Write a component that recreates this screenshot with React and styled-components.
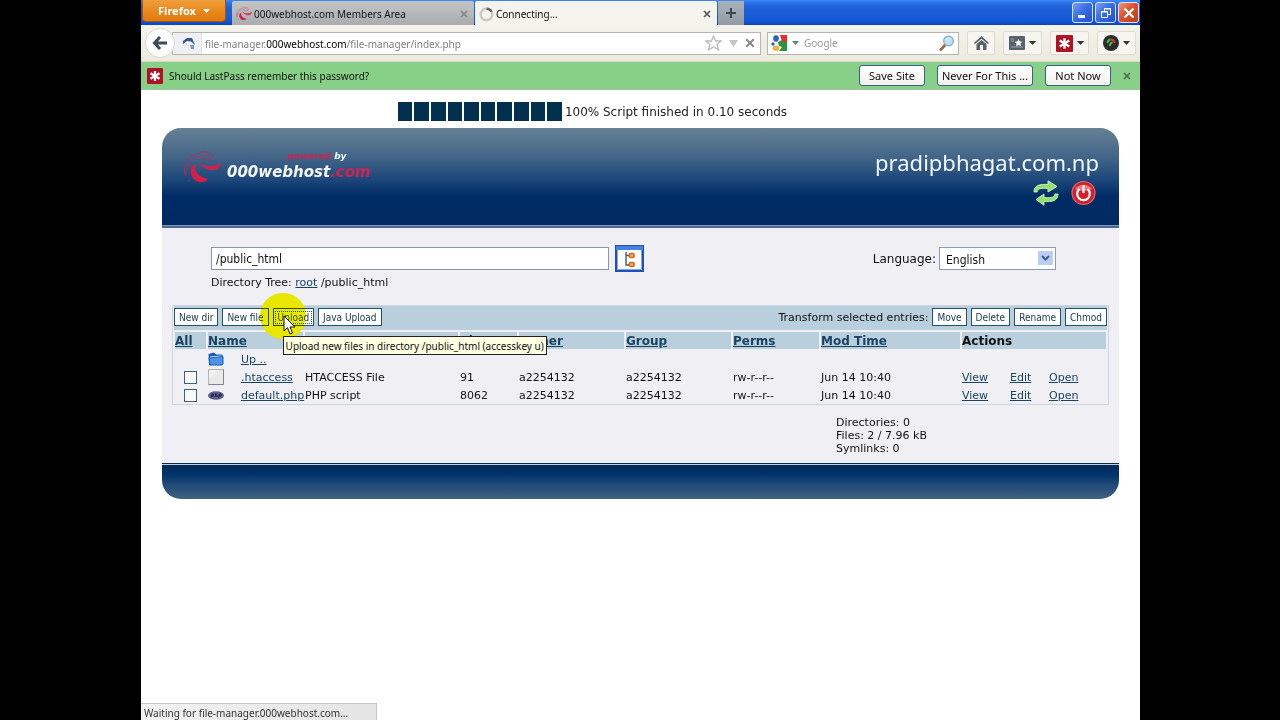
import React, { useState } from 'react';
import styled, { createGlobalStyle } from 'styled-components';

const uiFont = `'Noto Sans', 'Open Sans', sans-serif`;
const controlFont = `'DejaVu Sans Condensed', 'DejaVu Sans', sans-serif`;
const siteFont = `'DejaVu Sans', sans-serif`;

const GlobalStyle = createGlobalStyle`
    * {
        box-sizing: border-box;
    }
    body {
        margin: 0;
        background: #000;
        font-family: ${siteFont};
        color: #111;
    }
    button, input, select {
        font-family: inherit;
        color: inherit;
        margin: 0;
    }
    svg {
        display: block;
        flex: none;
    }
`;

const Screen = styled.div`
    padding: 0 140px 0 141px;
`;

const Window = styled.div`
    display: flex;
    flex-direction: column;
    min-height: 100vh;
    background: #fff;
    overflow: hidden;
`;

/* browser chrome */

const TitleBar = styled.header`
    display: flex;
    height: 25px;
    padding-left: 1px;
    font-family: ${uiFont};
    background: linear-gradient(#3d8df5 0, #2a6fe6 3px, #1f5fd6 8px, #1458d8 20px, #0a45c0 25px);
`;

const FirefoxButton = styled.button`
    width: 84px;
    height: 22px;
    margin-right: 6px;
    padding: 0;
    border: 1px solid #a8560c;
    border-top: 0;
    border-radius: 0 0 4px 4px;
    background: linear-gradient(#f0a040, #ea8a1c 50%, #de7a10);
    color: #fff;
    font-size: 11px;
    font-weight: bold;
    display: flex;
    align-items: center;
    justify-content: center;
    gap: 7px;
`;

const Tab = styled.div`
    display: flex;
    align-items: center;
    gap: 2px;
    width: 242px;
    height: 24px;
    margin: 1px 1px 0 0;
    padding: 2px 6px 0 4px;
    border-radius: 2px 2px 0 0;
    background: ${props => props.$active ? '#f4f3ec' : 'linear-gradient(#c3c4c4, #a9adb0)'};
    font-size: 10px;

    span {
        flex: 1;
        white-space: nowrap;
    }
`;

const PlainButton = styled.button`
    display: flex;
    align-items: center;
    justify-content: center;
    padding: 0;
    border: 0;
    background: none;
`;

const NewTab = styled(PlainButton)`
    width: 26px;
    height: 24px;
    margin-top: 1px;
    background: linear-gradient(#a9b1b9, #939ca6);
`;

const WindowButtons = styled.div`
    display: flex;
    gap: 2px;
    margin: 2px 1px 0 auto;
`;

const WindowButton = styled(PlainButton)`
    width: 21px;
    height: 21px;
    border: 1px solid #d6e2fa;
    border-radius: 3px;
    background: ${props => props.$close
        ? 'linear-gradient(135deg, #f09878, #e0502c 45%, #c03c18)'
        : 'linear-gradient(135deg, #7ba2f2, #3a6ee4 45%, #1f50cc)'};
`;

const NavBar = styled.nav`
    display: flex;
    align-items: center;
    height: 37px;
    padding: 0 4px;
    background: linear-gradient(#f4f3ec, #ece9dc);
    border-bottom: 1px solid #d8d8c4;
    font-family: ${uiFont};
    font-size: 10px;
`;

const BackButton = styled(PlainButton)`
    width: 30px;
    height: 30px;
    border: 1px solid #dcdad0;
    border-radius: 50%;
    background: #fdfdfb;
    position: relative;
    z-index: 1;
`;

const Field = styled.div`
    display: flex;
    align-items: center;
    height: 23px;
    border: 1px solid #b6b6b0;
    background: #fff;

    input {
        flex: 1;
        min-width: 0;
        padding: 0;
        border: 0;
        outline: 0;
        background: none;
        font-size: 10px;
    }
    input::placeholder {
        color: #999;
        opacity: 1;
    }
`;

const AddressBar = styled(Field)`
    flex: 1;
    margin: 0 6px 0 -3px;
    padding-right: 5px;
    gap: 7px;
`;

const SiteIdentity = styled.span`
    display: flex;
    align-items: center;
    justify-content: center;
    width: 29px;
    height: 21px;
    padding-left: 4px;
    background: #eef0f6;
    border-right: 1px solid #dfe3ee;
`;

const Url = styled.div`
    flex: 1;
    margin-left: -4px;
    padding-top: 1px;
    color: #808080;
    white-space: nowrap;

    b {
        font-weight: normal;
        color: #000;
    }
`;

const SearchBar = styled(Field)`
    width: 192px;
    padding: 0 3px;
    gap: 5px;
`;

const ToolButton = styled(PlainButton)`
    width: ${props => props.$narrow ? '28px' : '39px'};
    height: 24px;
    margin-left: 8px;
    gap: 4px;
    border: 1px solid #dedbd0;
    border-radius: 2px;
    background: #f6f5ef;
`;

const Notice = styled.div`
    display: flex;
    align-items: center;
    height: 28px;
    padding: 0 9px 0 6px;
    background: #88cf87;
    border-bottom: 1px solid #a4bfa2;
    font-family: ${uiFont};
    font-size: 10px;

    p {
        flex: 1;
        margin: 0 0 0 6px;
    }
`;

const NoticeButton = styled.button`
    width: ${props => props.$wide ? '96px' : '66px'};
    height: 21px;
    margin-right: 12px;
    padding: 0;
    border: 1px solid #36618c;
    border-radius: 3px;
    background: linear-gradient(#fff, #f2f1ea);
    font-size: 11px;
    white-space: nowrap;
`;

const StatusBar = styled.footer`
    align-self: flex-start;
    width: 236px;
    height: 17px;
    margin-top: auto;
    padding-left: 3px;
    border: 1px solid #c6c6c6;
    border-width: 1px 1px 0 0;
    background: linear-gradient(90deg, #f2f2f2, #e4e4e4);
    font-family: ${uiFont};
    font-size: 10px;
    line-height: 18px;
    color: #333;
`;

/* file manager page */

const Page = styled.main`
    padding: 12px 21px;
`;

const Progress = styled.div`
    display: flex;
    align-items: center;
    justify-content: center;
    gap: 3px;
    height: 19px;
    margin-bottom: 7px;
    padding-right: 96px;
    font-size: 12px;
    color: #222;
`;

const Blocks = styled.div`
    display: grid;
    grid-template-columns: repeat(10, 1fr);
    gap: 2px;
    width: 164px;
    height: 19px;

    i {
        background: #04304f;
    }
`;

const Card = styled.section`
    overflow: hidden;
    border-radius: 19px;
    background: #f0f0f4;
`;

const CardHeader = styled.div`
    display: flex;
    justify-content: space-between;
    height: 100px;
    padding: 22px 20px 0 21px;
    background: linear-gradient(#668194 0, #416488 30px, #1d477a 52px, #002c66 68px, #002a60 97px, #8398b4 97px, #8398b4 98px, #4a6a92 98px);
`;

const Brand = styled.a`
    display: flex;
    align-items: flex-start;
    gap: 6px;
    height: 40px;
    color: #f4f8ff;
    font-weight: bold;
    font-style: italic;
    text-decoration: none;

    svg {
        margin-top: 1px;
    }
    em {
        color: #cc2450;
    }
`;

const BrandText = styled.span`
    display: flex;
    flex-direction: column;
    font-size: 15px;
    line-height: 18px;

    small {
        padding-left: 60px;
        font-size: 9px;
        line-height: 13px;
    }
`;

const Account = styled.div`
    text-align: right;
    color: #f0f8ff;

    h1 {
        margin: 0;
        font-family: 'Noto Sans', sans-serif;
        font-size: 22px;
        font-weight: normal;
        line-height: 24px;
    }
`;

const AccountButtons = styled.div`
    display: flex;
    justify-content: flex-end;
    gap: 12px;
    padding: 6px 3px 0 0;
`;

const CardBody = styled.div`
    padding: 17px 10px 8px;
`;

const PathRow = styled.form`
    display: flex;
    align-items: center;
    height: 27px;
    padding: 0 53px 0 39px;
    font-size: 12px;
`;

const PathInput = styled.input`
    flex: 0 1 398px;
    min-width: 0;
    height: 23px;
    margin-right: 6px;
    padding: 0 4px;
    border: 1px solid #8a97a4;
    background: #fff;
    font-family: ${controlFont};
    font-size: 12px;
`;

const LanguageLabel = styled.label`
    margin: 0 3px 0 auto;
`;

const SelectBox = styled.div`
    position: relative;

    select {
        width: 117px;
        height: 23px;
        padding: 2px 6px 0;
        appearance: none;
        border: 1px solid #8a9bb4;
        border-radius: 0;
        background: #fff;
        font-family: ${controlFont};
        font-size: 12px;
    }
    svg {
        position: absolute;
        top: 4px;
        right: 3px;
        pointer-events: none;
    }
`;

const Crumbs = styled.p`
    margin: 4px 0 15px 39px;
    font-size: 11px;
    line-height: 14px;
`;

const Link = styled.a`
    color: #174461;
    text-decoration: underline;
`;

const Listing = styled.div`
    border: 1px solid #cbd6e0;
`;

const ActionBar = styled.div`
    display: flex;
    align-items: center;
    gap: 4px;
    height: 24px;
    margin: 0 1px 2px;
    padding-bottom: 2px;
    background: #b9cfde;
    font-size: 11px;
`;

const TransformLabel = styled.span`
    margin-left: auto;
    white-space: nowrap;
`;

const ActionButton = styled.button`
    position: relative;
    z-index: 2;
    height: 18px;
    padding: 0 4px;
    border: 1px solid #24506c;
    background: #fff;
    color: #17374c;
    font-family: ${controlFont};
    font-size: 10px;
    white-space: nowrap;

    span {
        display: block;
        margin: 0 -3px;
        padding: 0 2px;
        border: 1px dotted ${props => props.$focused ? '#24506c' : 'transparent'};
    }
`;

const Pointed = styled.div`
    position: relative;
    height: 18px;
`;

const Halo = styled.i`
    position: absolute;
    z-index: ${props => props.$over ? 3 : 1};
    top: -15px;
    left: -13px;
    width: 46px;
    height: 46px;
    border-radius: 50%;
    background: #e9e600;
    mix-blend-mode: ${props => props.$over ? 'darken' : 'normal'};
    pointer-events: none;
`;

const Pointer = styled.svg`
    position: absolute;
    z-index: 5;
    top: 7px;
    left: 10px;
    pointer-events: none;
`;

const Tooltip = styled.div`
    position: absolute;
    z-index: 4;
    top: 28px;
    left: 10px;
    height: 19px;
    padding: 0 2px;
    border: 1px solid #222;
    background: #ffffe1;
    font-family: ${uiFont};
    font-size: 10px;
    line-height: 18px;
    white-space: nowrap;
`;

const FileTable = styled.table`
    width: 100%;
    table-layout: fixed;
    border-collapse: separate;
    border-spacing: 2px 0;
    font-size: 11px;

    th {
        height: 17px;
        padding: 1px 0 0;
        background: #b9cfde;
        font-size: 12px;
        line-height: 16px;
        text-align: left;
    }
    td {
        height: 18px;
        padding: 1px 0 0;
        line-height: 17px;
        white-space: nowrap;
    }
    tbody tr:first-child td {
        padding-top: 2px;
    }
`;

const Tick = styled.input`
    display: block;
    appearance: none;
    width: 13px;
    height: 13px;
    margin: 0 0 0 9px;
    border: 1px solid #3f6276;
    background: #f8f8f6;
`;

const NameCell = styled.div`
    display: grid;
    grid-template-columns: 33px 1fr;
    align-items: center;

    svg {
        margin-bottom: 1px;
    }
`;

const Actions = styled.div`
    display: grid;
    grid-template-columns: 48px 39px 1fr;
`;

const Totals = styled.p`
    margin: 11px 0 0 664px;
    font-size: 11px;
    line-height: 13px;
`;

const CardFooter = styled.div`
    height: 36px;
    border-top: 1px solid #0d2c48;
    background: linear-gradient(#c0d0dc 0, #c0d0dc 1px, #002a58 1px, #00336b 10px, #1d4877 20px, #42627f 35px);
`;

/* icons */

const DragonMark = ({ size = 38 }) => (
    <svg width={size} height={size * 34 / 38} viewBox="0 0 38 34" fill="none" stroke="#cc2450">
        <path d="M2 23C-1 12 8 2 21 1C28 1 32 5 29 8C26 11 20 8 17 5" strokeWidth="0.9" opacity="0.8" />
        <path d="M8 9C12 5 17 6 20 7M21 3C25 4 27 5 28 7" strokeWidth="0.8" opacity="0.8" />
        <path d="M16 12C22 17 33 17 37 12C37 20 26 22 16 12Z" fill="#d81e48" />
        <path d="M13 13C10 21 16 26 25 28C20 34 10 31 8 23C7 18 9 14 13 13Z" fill="#d81e48" stroke="none" />
        <path d="M3 25C2 18 4 14 8 12M5 29L7 31" strokeWidth="1" opacity="0.8" />
    </svg>
);

const CrossIcon = ({ color = '#777', size = 8 }) => (
    <svg width={size} height={size} viewBox="0 0 8 8" stroke={color} strokeWidth="1.6">
        <path d="M1 1L7 7M7 1L1 7" />
    </svg>
);

const Caret = ({ color = '#333' }) => (
    <svg width="7" height="4" viewBox="0 0 7 4"><path d="M0 0H7L3.5 4Z" fill={color} /></svg>
);

const Spinner = () => (
    <svg width="15" height="15" viewBox="0 0 15 15" fill="none" strokeWidth="2.4">
        <circle cx="7.5" cy="7.5" r="5.8" stroke="#c9c9c5" />
        <path d="M7.5 1.7A5.8 5.8 0 0 1 12.6 4.8" stroke="#666" />
    </svg>
);

const LastPassIcon = ({ size = 16 }) => (
    <svg width={size} height={size} viewBox="0 0 16 16">
        <rect width="16" height="16" rx="1" fill="#b01228" />
        <path d="M8 3V13M3.5 5.2L12.5 10.8M12.5 5.2L3.5 10.8" stroke="#fff" strokeWidth="2.2" />
    </svg>
);

const SiteIcon = () => (
    <svg width="14" height="13" viewBox="0 0 14 13">
        <path d="M1 4L5 1H10L13 8L9 4.500L5 4L1 7Z" fill="#345a92" />
        <path d="M8 8H12V12H9Z" fill="#8298bc" />
        <path d="M2 11L5 7" stroke="#d4dbe8" />
    </svg>
);

const GoogleIcon = () => (
    <svg width="16" height="16" viewBox="0 0 16 16">
        <path d="M9 0H16V7H11Z" fill="#e0342a" />
        <path d="M10 7H16V16H8L11 12Z" fill="#2a9540" />
        <path d="M7 7L11 5V12L8 11Z" fill="#2a9540" />
        <ellipse cx="5" cy="3.5" rx="2.8" ry="3.3" fill="#2b5fc4" />
        <circle cx="2" cy="9" r="1.7" fill="#2b5fc4" />
        <ellipse cx="5" cy="13.2" rx="3.4" ry="2.6" fill="#eeb040" />
    </svg>
);

const SearchIcon = () => (
    <svg width="17" height="17" viewBox="0 0 17 17">
        <path d="M2 15.5L8 9" stroke="#a3633c" strokeWidth="2.6" />
        <circle cx="10.5" cy="6" r="4.8" fill="#bfe2f6" stroke="#8ab0cc" strokeWidth="1.4" />
        <path d="M8 5C8.5 3.5 10 3 11.5 3.2" stroke="#fff" fill="none" />
    </svg>
);

const FolderIcon = () => (
    <svg width="16" height="14" viewBox="0 0 16 14">
        <path d="M0.500 2L6 0.5L8 2.5L14.500 2.500V12L1 13Z" fill="#1b5cb8" />
        <path d="M2 4.500L13.500 3.500V6H2Z" fill="#e6f1fc" />
        <path d="M1 6L15 4.500V12L14 13H2Z" fill="#4a94ea" stroke="#1c59ae" />
    </svg>
);

const BlankFileIcon = () => (
    <svg width="16" height="16" viewBox="0 0 16 16">
        <rect x="0.5" y="0.5" width="15" height="15" fill="#e9e9e9" stroke="#b4b4b4" />
        <path d="M15.5 0.5V15.5H0.5" stroke="#858585" fill="none" />
        <path d="M1 1H10L1 10Z" fill="#f2f2f2" />
    </svg>
);

const PhpIcon = () => (
    <svg width="16" height="9" viewBox="0 0 16 9">
        <ellipse cx="8" cy="4.5" rx="8" ry="4.3" fill="#5d5f92" />
        <path d="M3 7L4 3H5.5V5H4M7 6L8 2M7.6 4H9V6M10.5 7L11.5 3H13V5H11" stroke="#1e1e3c" fill="none" />
    </svg>
);

const TreeIcon = () => (
    <svg width="29" height="27" viewBox="0 0 29 27">
        <rect x="1" y="1" width="27" height="25" fill="#fff" stroke="#2350b4" strokeWidth="2" />
        <rect x="1" y="1" width="27" height="4" fill="#4680e0" />
        <path d="M2.5 5V24.5H26.5V5" stroke="#7ea6ee" fill="none" />
        <path d="M11 7V20H15M11 10.500H15" stroke="#445a78" strokeWidth="1.4" fill="none" />
        <rect x="14.500" y="8.500" width="4.500" height="4" rx="1" fill="#f8b060" stroke="#d8681c" strokeWidth="1.6" />
        <rect x="14.500" y="17.500" width="4.500" height="4" rx="1" fill="#f8b060" stroke="#d8681c" strokeWidth="1.6" />
    </svg>
);

const RefreshIcon = () => (
    <svg width="26" height="26" viewBox="0 0 26 26" fill="#8fe070" stroke="#d4f8c0" strokeWidth="0.9">
        <path d="M1 12C1 5 7 4 15 4.500V0.800L24 6.500L15 12V8.500C9 8 5 8 4 12Z" />
        <path d="M25 14C25 21 19 22 11 21.500V25.200L3 19.500L11 14V17.500C17 18 21 18 22 14Z" />
    </svg>
);

const PowerIcon = () => (
    <svg width="25" height="26" viewBox="0 0 25 26" fill="none">
        <circle cx="12.500" cy="13" r="11.500" fill="#d3202c" stroke="#e0686c" strokeWidth="1.2" />
        <path d="M4 9A10 9 0 0 1 21 9Q12 13 4 9Z" fill="#ee7a7c" />
        <path d="M8.500 9A6.300 6.300 0 1 0 16.500 9M12.500 5V13" stroke="#fff" strokeWidth="2.2" />
    </svg>
);

const columns = [
    ['All', 31], ['Name', 95], ['Type', 153], ['Size', 57], ['Owner', 105],
    ['Group', 105], ['Perms', 86], ['Mod Time', 139], ['Actions', 144],
];

const files = [
    { name: '.htaccess', icon: <BlankFileIcon />, type: 'HTACCESS File', size: '91' },
    { name: 'default.php', icon: <PhpIcon />, type: 'PHP script', size: '8062' },
];

function Chrome() {
    return (
        <>
            <TitleBar>
                <FirefoxButton>Firefox <Caret color="#fff" /></FirefoxButton>
                <Tab>
                    <DragonMark size={16} />
                    <span>000webhost.com Members Area</span>
                    <PlainButton aria-label="Close tab"><CrossIcon color="#858585" /></PlainButton>
                </Tab>
                <Tab $active>
                    <Spinner />
                    <span>Connecting...</span>
                    <PlainButton aria-label="Close tab"><CrossIcon color="#555" /></PlainButton>
                </Tab>
                <NewTab aria-label="New tab">
                    <svg width="10" height="10" viewBox="0 0 10 10" stroke="#3c4650" strokeWidth="2"><path d="M5 0V10M0 5H10" /></svg>
                </NewTab>
                <WindowButtons>
                    <WindowButton aria-label="Minimize">
                        <svg width="12" height="12"><rect x="1" y="8" width="7" height="3" fill="#fff" /></svg>
                    </WindowButton>
                    <WindowButton aria-label="Restore">
                        <svg width="12" height="12" fill="none" stroke="#fff"><path d="M4.500 4V1.500H10.500V7.500H8M4 2H11" /><path d="M1.500 4.500H7.500V10.500H1.500ZM1 5H8" /></svg>
                    </WindowButton>
                    <WindowButton $close aria-label="Close"><CrossIcon color="#fff" size={12} /></WindowButton>
                </WindowButtons>
            </TitleBar>
            <NavBar>
                <BackButton aria-label="Back">
                    <svg width="16" height="14" viewBox="0 0 16 14" fill="none" stroke="#414b55" strokeWidth="3"><path d="M8 1L2.500 7L8 13M3 7H15" /></svg>
                </BackButton>
                <AddressBar>
                    <SiteIdentity><SiteIcon /></SiteIdentity>
                    <Url>file-manager.<b>000webhost.com</b>/file-manager/index.php</Url>
                    <svg width="17" height="16" viewBox="0 0 17 16" fill="none" stroke="#bbb" strokeWidth="1.3"><path d="M8.500 1L10.600 6H16L12 9.400L13.500 15L8.500 11.800L3.500 15L5 9.400L1 6H6.400Z" /></svg>
                    <svg width="9" height="7"><path d="M0 0H9L4.500 7Z" fill="#c4c4c4" /></svg>
                    <PlainButton aria-label="Stop"><CrossIcon color="#888" size={10} /></PlainButton>
                </AddressBar>
                <SearchBar>
                    <GoogleIcon />
                    <Caret color="#5a8a7a" />
                    <input aria-label="Search" placeholder="Google" />
                    <SearchIcon />
                </SearchBar>
                <ToolButton $narrow aria-label="Home">
                    <svg width="15" height="14" viewBox="0 0 15 14" fill="#59626c"><path d="M7.500 0L15 7L14 8L7.500 2.800L1 8L0 7Z" /><path d="M2.500 8L7.500 4L12.500 8V14H9V9H6V14H2.500Z" /></svg>
                </ToolButton>
                <ToolButton aria-label="Bookmarks">
                    <svg width="16" height="14" viewBox="0 0 16 14"><rect width="16" height="14" rx="1" fill="#59626c" /><path d="M2 3H5M2 5H5M2 11H14" stroke="#9aa2aa" /><path d="M9.500 3L10.700 5.500L13.500 5.800L11.400 7.600L12 10.300L9.500 8.900L7 10.300L7.600 7.600L5.500 5.800L8.300 5.500Z" fill="#fff" /></svg>
                    <Caret />
                </ToolButton>
                <ToolButton aria-label="LastPass"><LastPassIcon size={17} /><Caret /></ToolButton>
                <ToolButton aria-label="Downloads">
                    <svg width="16" height="16" viewBox="0 0 16 16" fill="none" strokeWidth="2"><circle cx="8" cy="8" r="8" fill="#2a2d2c" /><path d="M4.500 8A4 4 0 0 1 7.500 4.500" stroke="#42b648" /><path d="M7.500 4.500A4 4 0 0 1 11.500 8" stroke="#d83a2c" /><path d="M7 11A3 3 0 0 1 9.500 7.500" stroke="#5ab848" /></svg>
                    <Caret />
                </ToolButton>
            </NavBar>
            <Notice>
                <LastPassIcon />
                <p>Should LastPass remember this password?</p>
                <NoticeButton>Save Site</NoticeButton>
                <NoticeButton $wide>Never For This ...</NoticeButton>
                <NoticeButton>Not Now</NoticeButton>
                <PlainButton aria-label="Dismiss"><CrossIcon color="#4a6a4a" /></PlainButton>
            </Notice>
        </>
    );
}

function UploadButton() {
    return (
        <Pointed>
            <Halo />
            <ActionButton $focused accessKey="u" aria-describedby="upload-tip"><span>Upload</span></ActionButton>
            <Halo $over />
            <Tooltip role="tooltip" id="upload-tip">Upload new files in directory /public_html (accesskey u)</Tooltip>
            <Pointer width="13" height="20" viewBox="0 0 13 20">
                <path d="M1 1V16L4.500 12.700L7 19L9.500 18L7 12H12Z" fill="#fff" stroke="#111" />
            </Pointer>
        </Pointed>
    );
}

function FileListing() {
    return (
        <Listing>
            <ActionBar>
                <ActionButton><span>New dir</span></ActionButton>
                <ActionButton><span>New file</span></ActionButton>
                <UploadButton />
                <ActionButton><span>Java Upload</span></ActionButton>
                <TransformLabel>Transform selected entries:</TransformLabel>
                <ActionButton><span>Move</span></ActionButton>
                <ActionButton><span>Delete</span></ActionButton>
                <ActionButton><span>Rename</span></ActionButton>
                <ActionButton><span>Chmod</span></ActionButton>
            </ActionBar>
            <FileTable>
                <colgroup>
                    {columns.map(([label, width]) => <col key={label} width={width} />)}
                </colgroup>
                <thead>
                    <tr>
                        {columns.map(([label]) => (
                            <th key={label}>{label === 'Actions' ? label : <Link href="#">{label}</Link>}</th>
                        ))}
                    </tr>
                </thead>
                <tbody>
                    <tr>
                        <td />
                        <td><NameCell><FolderIcon /><Link href="#">Up ..</Link></NameCell></td>
                        <td colSpan={7} />
                    </tr>
                    {files.map(file => (
                        <tr key={file.name}>
                            <td><Tick type="checkbox" aria-label={file.name} /></td>
                            <td><NameCell>{file.icon}<Link href="#">{file.name}</Link></NameCell></td>
                            <td>{file.type}</td>
                            <td>{file.size}</td>
                            <td>a2254132</td>
                            <td>a2254132</td>
                            <td>rw-r--r--</td>
                            <td>Jun 14 10:40</td>
                            <td>
                                <Actions>
                                    <span><Link href="#">View</Link></span>
                                    <span><Link href="#">Edit</Link></span>
                                    <span><Link href="#">Open</Link></span>
                                </Actions>
                            </td>
                        </tr>
                    ))}
                </tbody>
            </FileTable>
        </Listing>
    );
}

function App() {
    const [path, setPath] = useState('/public_html');

    return (
        <Screen>
            <GlobalStyle />
            <Window>
                <Chrome />
                <Page>
                    <Progress>
                        <Blocks>{Array.from({ length: 10 }, (_, i) => <i key={i} />)}</Blocks>
                        <span>100% Script finished in 0.10 seconds</span>
                    </Progress>
                    <Card>
                        <CardHeader>
                            <Brand href="#">
                                <DragonMark />
                                <BrandText>
                                    <small><em>powered</em> by</small>
                                    <span>000webhost<em>.com</em></span>
                                </BrandText>
                            </Brand>
                            <Account>
                                <h1>pradipbhagat.com.np</h1>
                                <AccountButtons>
                                    <PlainButton aria-label="Refresh"><RefreshIcon /></PlainButton>
                                    <PlainButton aria-label="Log out"><PowerIcon /></PlainButton>
                                </AccountButtons>
                            </Account>
                        </CardHeader>
                        <CardBody>
                            <PathRow>
                                <PathInput aria-label="Directory" value={path} onChange={e => setPath(e.target.value)} />
                                <PlainButton type="button" aria-label="Change directory"><TreeIcon /></PlainButton>
                                <LanguageLabel htmlFor="language">Language:</LanguageLabel>
                                <SelectBox>
                                    <select id="language"><option>English</option></select>
                                    <svg width="15" height="14" viewBox="0 0 15 14">
                                        <rect width="15" height="14" rx="1" fill="#bccdf6" />
                                        <path d="M4 5L7.500 8.500L11 5" fill="none" stroke="#43588e" strokeWidth="2" />
                                    </svg>
                                </SelectBox>
                            </PathRow>
                            <Crumbs>Directory Tree: <Link href="#">root</Link> /public_html</Crumbs>
                            <FileListing />
                            <Totals>
                                Directories: 0<br />
                                Files: 2 / 7.96 kB<br />
                                Symlinks: 0
                            </Totals>
                        </CardBody>
                        <CardFooter />
                    </Card>
                </Page>
                <StatusBar>Waiting for file-manager.000webhost.com...</StatusBar>
            </Window>
        </Screen>
    );
}

export default App;
